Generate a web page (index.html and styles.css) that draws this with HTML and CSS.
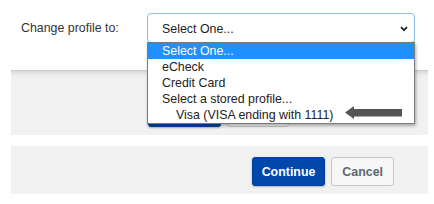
FILE: index.html
```html
<!DOCTYPE html>
<html lang="en">
<head>
  <meta charset="utf-8">
  <link rel="stylesheet" href="styles.css">
</head>
<body>
  <div class="panel">
    <div class="form-row">
      <label class="label">Change profile to:</label>
      <div class="field">
        <div class="select">
          <span>Select One...</span>
          <svg class="chevron" width="8" height="6" viewBox="0 0 8 6">
            <path d="M1 1.2 L4 4.2 L7 1.2" fill="none" stroke="#222" stroke-width="1.8"/>
          </svg>
        </div>
        <ul class="dropdown">
          <li class="option selected">Select One...</li>
          <li class="option">eCheck</li>
          <li class="option">Credit Card</li>
          <li class="option">Select a stored profile...</li>
          <li class="option nested">Visa (VISA ending with 1111)</li>
        </ul>
        <svg class="pointer" width="58" height="15" viewBox="0 0 58 15">
          <polygon points="0,7.5 9,1 9,4 57,4 57,11.5 9,11.5 9,14" fill="#555555"/>
        </svg>
      </div>
    </div>

    <div class="band band-top">
      <div class="actions">
        <button class="btn primary hidden-btn" aria-label="Save"></button>
        <button class="btn secondary hidden-btn small" aria-label="Cancel"></button>
      </div>
    </div>

    <div class="band band-bottom">
      <div class="actions">
        <button class="btn primary">Continue</button>
        <button class="btn secondary">Cancel</button>
      </div>
    </div>
  </div>
</body>
</html>
```

FILE: styles.css
```css
* {
  box-sizing: border-box;
}

body {
  margin: 0;
  padding: 0;
  font-family: "Liberation Sans", Arial, sans-serif;
  font-size: 12.4px;
  color: #333333;
  background: #ffffff;
}

.panel {
  margin: 0 6px 0 11px;
}

.form-row {
  display: flex;
  align-items: flex-start;
  height: 70px;
  padding: 13px 0 0 10px;
}

.label {
  width: 126px;
  line-height: 30px;
  color: #333333;
}

.field {
  position: relative;
}

.select {
  display: flex;
  align-items: center;
  justify-content: space-between;
  width: 268px;
  height: 30px;
  padding: 1px 6px 0 14px;
  border: 1px solid #92bbef;
  border-radius: 4px;
  background: #ffffff;
  color: #222222;
}

.chevron {
  margin-top: 1px;
}

.dropdown {
  position: absolute;
  top: 29px;
  left: 0;
  width: 268px;
  margin: 0;
  padding: 0;
  list-style: none;
  background: #ffffff;
  border: 1px solid #7b7b7b;
  box-shadow: 1px 2px 3px rgba(0, 0, 0, 0.3);
  z-index: 2;
}

.option {
  height: 16px;
  line-height: 17px;
  padding-left: 14px;
  color: #222222;
  white-space: nowrap;
}

.option.selected {
  background: #1e90ff;
  color: #ffffff;
}

.option.nested {
  padding-left: 28px;
}

.pointer {
  position: absolute;
  top: 92px;
  left: 198px;
  z-index: 3;
}

.band {
  background: #f1f1f1;
}

.band-top {
  height: 65px;
  padding: 27px 0 0 137px;
  border-top: 1px solid #c9c9c9;
  background: linear-gradient(#dadada 0, #ececec 4px, #f1f1f1 8px);
}

.band-bottom {
  display: flex;
  justify-content: flex-end;
  height: 48px;
  margin-top: 11px;
  padding: 11px 34px 0 0;
}

.actions {
  display: flex;
  gap: 6px;
}

.btn {
  height: 29px;
  padding: 0 9px;
  border-radius: 3px;
  font-family: inherit;
  font-size: 12.4px;
  font-weight: bold;
  cursor: pointer;
}

.btn.primary {
  background: #0047ab;
  border: 1px solid #003f9c;
  color: #ffffff;
  box-shadow: 0 1px 2px rgba(0, 0, 0, 0.25);
}

.btn.secondary {
  background: #f7f7f7;
  border: 1px solid #c6c6c6;
  color: #5c6771;
  padding: 0 10px;
}

.hidden-btn {
  width: 73px;
}

.hidden-btn.small {
  width: 62px;
}
```
